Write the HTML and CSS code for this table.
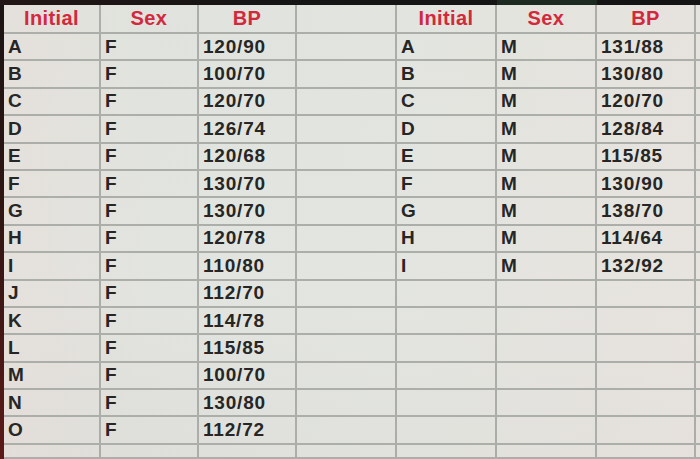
FILE: index.html
```html
<!DOCTYPE html>
<html>
<head>
<meta charset="utf-8">
<link rel="stylesheet" href="styles.css">
</head>
<body>
<div class="page">
  <div class="topband"><span class="seg-green"></span></div>
  <div class="main">
    <div class="edge"></div>
    <div class="sheet">
      <div class="c hd">Initial</div><div class="c hd">Sex</div><div class="c hd">BP</div><div class="c"></div><div class="c hd">Initial</div><div class="c hd">Sex</div><div class="c hd">BP</div><div class="c end"></div>

      <div class="c">A</div><div class="c">F</div><div class="c">120/90</div><div class="c"></div><div class="c">A</div><div class="c">M</div><div class="c">131/88</div><div class="c end"></div>
      <div class="c">B</div><div class="c">F</div><div class="c">100/70</div><div class="c"></div><div class="c">B</div><div class="c">M</div><div class="c">130/80</div><div class="c end"></div>
      <div class="c">C</div><div class="c">F</div><div class="c">120/70</div><div class="c"></div><div class="c">C</div><div class="c">M</div><div class="c">120/70</div><div class="c end"></div>
      <div class="c">D</div><div class="c">F</div><div class="c">126/74</div><div class="c"></div><div class="c">D</div><div class="c">M</div><div class="c">128/84</div><div class="c end"></div>
      <div class="c">E</div><div class="c">F</div><div class="c">120/68</div><div class="c"></div><div class="c">E</div><div class="c">M</div><div class="c">115/85</div><div class="c end"></div>
      <div class="c">F</div><div class="c">F</div><div class="c">130/70</div><div class="c"></div><div class="c">F</div><div class="c">M</div><div class="c">130/90</div><div class="c end"></div>
      <div class="c">G</div><div class="c">F</div><div class="c">130/70</div><div class="c"></div><div class="c">G</div><div class="c">M</div><div class="c">138/70</div><div class="c end"></div>
      <div class="c">H</div><div class="c">F</div><div class="c">120/78</div><div class="c"></div><div class="c">H</div><div class="c">M</div><div class="c">114/64</div><div class="c end"></div>
      <div class="c">I</div><div class="c">F</div><div class="c">110/80</div><div class="c"></div><div class="c">I</div><div class="c">M</div><div class="c">132/92</div><div class="c end"></div>
      <div class="c">J</div><div class="c">F</div><div class="c">112/70</div><div class="c"></div><div class="c"></div><div class="c"></div><div class="c"></div><div class="c end"></div>
      <div class="c">K</div><div class="c">F</div><div class="c">114/78</div><div class="c"></div><div class="c"></div><div class="c"></div><div class="c"></div><div class="c end"></div>
      <div class="c">L</div><div class="c">F</div><div class="c">115/85</div><div class="c"></div><div class="c"></div><div class="c"></div><div class="c"></div><div class="c end"></div>
      <div class="c">M</div><div class="c">F</div><div class="c">100/70</div><div class="c"></div><div class="c"></div><div class="c"></div><div class="c"></div><div class="c end"></div>
      <div class="c">N</div><div class="c">F</div><div class="c">130/80</div><div class="c"></div><div class="c"></div><div class="c"></div><div class="c"></div><div class="c end"></div>
      <div class="c">O</div><div class="c">F</div><div class="c">112/72</div><div class="c"></div><div class="c"></div><div class="c"></div><div class="c"></div><div class="c end"></div>
      <div class="c"></div><div class="c"></div><div class="c"></div><div class="c"></div><div class="c"></div><div class="c"></div><div class="c"></div><div class="c end"></div>
    </div>
  </div>
</div>
</body>
</html>
```
FILE: styles.css
```css
html, body {
  margin: 0;
  padding: 0;
}
body {
  width: 700px;
  height: 459px;
  overflow: hidden;
  background: #dfe2dc;
  font-family: "Liberation Sans", Arial, sans-serif;
}
.page {
  display: flex;
  flex-direction: column;
  width: 700px;
  height: 459px;
}
.topband {
  height: 5px;
  flex: none;
  background: linear-gradient(90deg, #231616 0%, #151515 40%, #141414 100%);
  display: flex;
  padding-left: 497px;
}
.seg-green {
  display: block;
  width: 100px;
  height: 5px;
  background: #1d2a22;
}
.main {
  flex: 1;
  display: flex;
  min-height: 0;
}
.edge {
  width: 4px;
  flex: none;
  background: linear-gradient(180deg, #1b1414 0%, #2c1512 40%, #5a1a18 100%);
}
.sheet {
  flex: 1;
  display: grid;
  grid-template-columns: 97px 98px 98px 100px 100px 100px 99px 1fr;
  grid-template-rows: 29px repeat(15, 27.4px) 1fr;
  background:
    linear-gradient(90deg, rgba(236, 218, 215, 0.35) 0%, rgba(226, 229, 223, 0) 20%, rgba(230, 233, 228, 0.25) 55%, rgba(238, 226, 222, 0.45) 100%),
    linear-gradient(180deg, #e0e3dd 0%, #e2e4df 60%, #dedfda 100%);
}
.c {
  box-sizing: border-box;
  border-right: 2px solid #abaea8;
  border-bottom: 2px solid #acafa9;
  padding-left: 4px;
  font-size: 19px;
  font-weight: bold;
  letter-spacing: 0.8px;
  color: #262626;
  display: flex;
  align-items: center;
  white-space: nowrap;
  overflow: hidden;
}
.c.end {
  border-right: none;
}
.c.hd {
  justify-content: center;
  padding-left: 0;
  font-size: 20px;
  letter-spacing: 0.4px;
  color: #d3293d;
}
```
